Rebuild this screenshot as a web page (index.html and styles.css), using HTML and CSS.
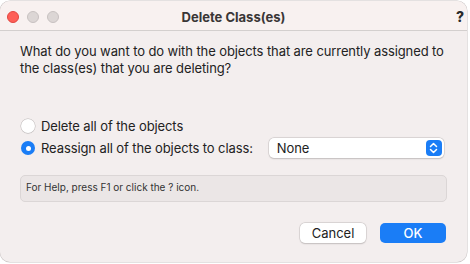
FILE: index.html
```html
<!DOCTYPE html>
<html>
<head>
<meta charset="utf-8">
<link rel="stylesheet" href="styles.css">
</head>
<body>
<div class="window">
  <div class="titlebar">
    <div class="lights">
      <span class="light red"></span>
      <span class="light gray"></span>
      <span class="light gray"></span>
    </div>
    <div class="title">Delete Class(es)</div>
    <div class="help-q">?</div>
  </div>
  <div class="content">
    <p class="question">What do you want to do with the objects that are currently assigned to the class(es) that you are deleting?</p>
    <div class="options">
      <div class="option">
        <span class="radio"></span>
        <span class="label">Delete all of the objects</span>
      </div>
      <div class="option">
        <span class="radio checked"></span>
        <span class="label">Reassign all of the objects to class:</span>
        <div class="select">
          <span class="select-text">None</span>
          <span class="stepper">
            <svg width="9" height="12" viewBox="0 0 9 12"><path d="M1.5 4.5 L4.5 1.5 L7.5 4.5 M1.5 7.5 L4.5 10.5 L7.5 7.5" fill="none" stroke="#fff" stroke-width="1.5" stroke-linecap="round" stroke-linejoin="round"/></svg>
          </span>
        </div>
      </div>
    </div>
    <div class="helpbox">For Help, press F1 or click the ? icon.</div>
    <div class="buttons">
      <button class="btn cancel">Cancel</button>
      <button class="btn ok">OK</button>
    </div>
  </div>
</div>
</body>
</html>
```

FILE: styles.css
```css
html, body {
  margin: 0;
  padding: 0;
  background: #ffffff;
}
body {
  width: 470px;
  height: 264px;
  overflow: hidden;
  font-family: Inter, "Liberation Sans", sans-serif;
  color: #262626;
}
.window {
  margin-top: 1px;
  width: 467px;
  height: 261px;
  background: #f3eeee;
  border-radius: 10px;
  box-shadow: 0 0 0 0.5px #c9c4c4;
  overflow: hidden;
  box-sizing: border-box;
}
.titlebar {
  height: 29px;
  background: #f8f1f0;
  border-bottom: 1px solid #d3cfce;
  display: flex;
  align-items: center;
  position: relative;
}
.lights {
  display: flex;
  gap: 8px;
  padding-left: 7px;
  padding-top: 2px;
}
.light {
  width: 12px;
  height: 12px;
  border-radius: 50%;
  box-sizing: border-box;
}
.light.red {
  background: #fe5f57;
  border: 0.5px solid #e14640;
}
.light.gray {
  background: #dcd6d5;
  border: 0.5px solid #c7c1c0;
}
.title {
  position: absolute;
  left: 0;
  right: 0;
  top: 8px;
  text-align: center;
  font-size: 13px;
  font-weight: 700;
  color: #3a3636;
}
.help-q {
  position: absolute;
  right: 3px;
  top: 7px;
  font-size: 14px;
  font-weight: 800;
  color: #2a2a2a;
}
.content {
  padding: 12px 20px 0 20px;
}
.question {
  margin: 0;
  font-size: 13px;
  line-height: 16.5px;
  letter-spacing: -0.1px;
  color: #222;
}
.options {
  margin-top: 41px;
  display: flex;
  flex-direction: column;
  gap: 4px;
}
.option {
  display: flex;
  align-items: center;
  height: 18px;
  font-size: 13px;
  letter-spacing: -0.1px;
  color: #222;
}
.radio {
  width: 14px;
  height: 14px;
  border-radius: 50%;
  background: #ffffff;
  box-shadow: 0 0 0 0.5px #bdb8b8, 0 0.5px 1px rgba(0,0,0,0.15);
  margin-left: 1px;
  margin-right: 6px;
  box-sizing: border-box;
  position: relative;
}
.radio.checked {
  background: #1a7df6;
  box-shadow: none;
}
.radio.checked::after {
  content: "";
  position: absolute;
  left: 4.5px;
  top: 4.5px;
  width: 5px;
  height: 5px;
  border-radius: 50%;
  background: #fff;
}
.select {
  margin-left: 16px;
  width: 175px;
  height: 20px;
  background: #ffffff;
  border-radius: 5px;
  box-shadow: 0 0 0 0.5px #c8c3c3, 0 0.5px 1.5px rgba(0,0,0,0.2);
  display: flex;
  align-items: center;
  justify-content: space-between;
  box-sizing: border-box;
  padding: 0 2px 0 8px;
}
.select-text {
  font-size: 13px;
  color: #222;
}
.stepper {
  width: 16px;
  height: 16px;
  border-radius: 4px;
  background: #1a7df6;
  display: flex;
  align-items: center;
  justify-content: center;
}
.helpbox {
  margin-top: 18px;
  height: 27px;
  width: 427px;
  box-sizing: border-box;
  background: #ebe6e6;
  border: 1px solid #dbd6d6;
  border-radius: 5px;
  font-size: 10px;
  color: #333;
  padding: 5px 0 0 5px;
}
.buttons {
  margin-top: 21px;
  display: flex;
  justify-content: flex-end;
  gap: 14px;
  padding-right: 0;
  width: 426px;
}
.btn {
  width: 66px;
  height: 20px;
  border: none;
  border-radius: 5px;
  font-family: Inter, "Liberation Sans", sans-serif;
  font-size: 13px;
  padding: 0;
}
.cancel {
  background: #ffffff;
  color: #222;
  box-shadow: 0 0 0 0.5px #c8c3c3, 0 0.5px 1.5px rgba(0,0,0,0.2);
}
.ok {
  background: #1a7df6;
  color: #ffffff;
  font-weight: 500;
}
```
